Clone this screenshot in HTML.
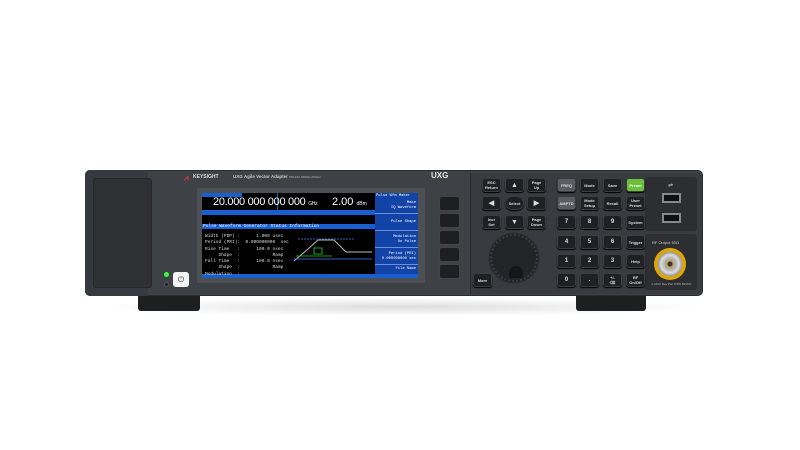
<!DOCTYPE html>
<html><head><style>
*{margin:0;padding:0;box-sizing:border-box}
body{width:800px;height:450px;background:#fff;position:relative;overflow:hidden;font-family:"Liberation Sans",sans-serif}
.a{position:absolute}
.k{position:absolute;width:19px;height:14px;background:#1e2023;border-radius:3px;border:1px solid #3a3d42;color:#ddd;font-size:4px;font-weight:bold;text-align:center;line-height:5px;display:flex;align-items:center;justify-content:center;box-shadow:0 1px 1px #000}
.n{font-size:6px}
.sk{position:absolute;left:439px;width:21px;height:15px;background:#1d1f22;border:1px solid #444;border-radius:3px}
.m{font-family:"Liberation Mono",monospace;color:#ddd;font-size:4.5px;position:absolute;white-space:pre}
.s{position:absolute;left:375px;width:43px;height:16px;border-bottom:1px solid #6d8fd8;color:#fff;font-family:"Liberation Mono",monospace;font-size:3.8px;text-align:right;padding:3px 2px 0 0;line-height:4.5px}
</style></head><body>
<div class="a" style="left:95px;top:298px;width:610px;height:18px;background:radial-gradient(ellipse at center,#ddd 0%,#fff 70%)"></div>
<div class="a" style="left:138px;top:295px;width:62px;height:16px;background:#1e1f21;border-radius:0 0 3px 3px"></div>
<div class="a" style="left:576px;top:295px;width:70px;height:16px;background:#1e1f21;border-radius:0 0 3px 3px"></div>
<div class="a" style="left:85px;top:170px;width:618px;height:126px;background:#3e4146;border-radius:5px;border:1px solid #2a2c30"></div>
<div class="a" style="left:85px;top:170px;width:63px;height:126px;background:#363940;border-radius:5px 0 0 5px"></div>
<div class="a" style="left:93px;top:178px;width:59px;height:110px;background:#2e3034;border-radius:3px;border:1px solid #26282b"></div>
<div class="a" style="left:184px;top:173px;color:#e03a2e;font-size:8px;font-weight:bold">⩘</div>
<div class="a" style="left:193px;top:174px;color:#ddd;font-size:5px;font-weight:bold">KEYSIGHT</div>
<div class="a" style="left:233px;top:174px;color:#ccc;font-size:4.5px;font-weight:bold">UXG Agile Vector Adapter <span style="font-size:3px;color:#999">N5194A  50MHz-20GHz</span></div>
<div class="a" style="left:431px;top:171px;color:#e8e8e8;font-size:8px;font-weight:bold">UXG</div>
<div class="a" style="left:197px;top:188px;width:228px;height:95px;background:#4c4f54;border-radius:2px"></div>
<div class="a" style="left:202px;top:193px;width:216px;height:85px;background:#000"></div>
<div class="a" style="left:202px;top:193px;width:40px;height:4px;background:#1a5fd0"></div>
<div class="a" style="left:277px;top:193px;width:72px;height:20px;background:#000;border-left:1px solid #1a5fd0"></div>
<div class="a" style="left:202px;top:210px;width:173px;height:5px;background:#1a5fd0"></div>
<div class="a" style="left:202px;top:224px;width:173px;height:5px;background:#1a5fd0"></div>
<div class="a" style="left:202px;top:274px;width:216px;height:4px;background:#1a5fd0"></div>
<div class="a" style="left:375px;top:193px;width:43px;height:81px;background:#1244a8"></div>
<div class="a" style="left:213px;top:196px;color:#fff;font-size:11px;letter-spacing:-.3px">20.000 000 000 000 <span style="font-size:5px">GHz</span></div>
<div class="a" style="left:332px;top:196px;color:#fff;font-size:11px">2.00 <span style="font-size:5px">dBm</span></div>
<div class="m" style="left:203px;top:224px;color:#fff">Pulse Waveform Generator Status Information</div>
<div class="m" style="left:205px;top:234px;line-height:6.3px">Width (PDP) :      1.000 usec
Period (PRI):  0.000000000  sec
Rise Time   :      100.0 nsec
     Shape  :            Ramp
Fall Time   :      100.0 nsec
     Shape  :            Ramp
Modulation  :</div>
<svg class="a" style="left:292px;top:238px" width="82" height="30"><polyline points="2,23 16,11 26,2 42,2 54,14 80,14" fill="none" stroke="#bbb" stroke-width="1"/><line x1="2" y1="21" x2="80" y2="21" stroke="#4a7cff" stroke-width=".7"/><rect x="22" y="10" width="8" height="6" fill="none" stroke="#2c2" stroke-width=".8"/><line x1="4" y1="18" x2="40" y2="18" stroke="#2c2" stroke-width=".8"/><line x1="6" y1="1" x2="62" y2="1" stroke="#4a7cff" stroke-dasharray="2 1" stroke-width=".7"/></svg>
<div class="m" style="left:376px;top:194px;color:#fff;font-size:3.8px">Pulse Wfm Maker</div>
<div class="s" style="top:198px">Make<br>IQ Waveform</div>
<div class="s" style="top:215px;padding-top:5px">Pulse Shape</div>
<div class="s" style="top:232px">Modulation<br>On Pulse</div>
<div class="s" style="top:249px">Period (PRI)<br>0.000000000 sec</div>
<div class="s" style="top:266px;height:8px;border:none;padding-top:1px">File Name</div>
<div class="sk" style="top:196px"></div><div class="sk" style="top:213px"></div><div class="sk" style="top:230px"></div><div class="sk" style="top:247px"></div><div class="sk" style="top:264px"></div>
<div class="a" style="left:164px;top:272px;width:5px;height:5px;border-radius:50%;background:#3f3"></div>
<div class="a" style="left:164px;top:282px;width:5px;height:5px;border-radius:50%;background:#222;border:1px solid #555"></div>
<div class="a" style="left:173px;top:272px;width:16px;height:15px;background:#f4f4f4;border-radius:3px;color:#333;font-size:8px;text-align:center;line-height:15px">⏻</div>
<div class="a" style="left:470px;top:173px;width:232px;height:121px;background:#383b40;border-left:1px solid #2a2c30"></div>
<div class="a" style="left:645px;top:177px;width:52px;height:54px;background:#2c2e32;border-radius:3px"></div>
<div class="a" style="left:645px;top:234px;width:52px;height:56px;background:#2c2e32;border-radius:3px"></div>
<div class="a" style="left:668px;top:182px;color:#ccc;font-size:6px">⇌</div>
<div class="a" style="left:662px;top:193px;width:19px;height:10px;background:#111;border:2px solid #888"></div>
<div class="a" style="left:662px;top:213px;width:19px;height:10px;background:#111;border:2px solid #888"></div>
<div class="a" style="left:652px;top:240px;color:#ccc;font-size:4px">RF Output 50Ω</div>
<div class="a" style="left:654px;top:248px;width:32px;height:32px;border-radius:50%;background:radial-gradient(circle,#333 0 2px,#c9a44a 3px,#aaa 5px,#ddd 9px,#999 12px,#e0a700 13px,#e0a700 16px)"></div>
<div class="a" style="left:651px;top:282px;color:#bbb;font-size:3px">⚠ MAX Rev Pwr 0.5W 50VDC</div>
<div class="k" style="left:482px;top:178px">ESC<br>Return</div>
<div class="k" style="left:505px;top:178px;font-size:7px">▲</div>
<div class="k" style="left:527px;top:178px">Page<br>Up</div>
<div class="k" style="left:557px;top:178px;background:#5a5e64">FREQ</div>
<div class="k" style="left:580px;top:178px">Mode</div>
<div class="k" style="left:603px;top:178px">Save</div>
<div class="k" style="left:626px;top:178px;background:#6bbf3a;color:#fff">Preset</div>
<div class="k" style="left:482px;top:196px;font-size:7px">◀</div>
<div class="k" style="left:505px;top:196px;border-radius:7px">Select</div>
<div class="k" style="left:527px;top:196px;font-size:7px">▶</div>
<div class="k" style="left:557px;top:196px;background:#5a5e64">AMPTD</div>
<div class="k" style="left:580px;top:196px">Mode<br>Setup</div>
<div class="k" style="left:603px;top:196px">Recall</div>
<div class="k" style="left:626px;top:196px">User<br>Preset</div>
<div class="k" style="left:482px;top:215px">Incr<br>Set</div>
<div class="k" style="left:505px;top:215px;font-size:7px">▼</div>
<div class="k" style="left:527px;top:215px">Page<br>Down</div>
<div class="k n" style="left:557px;top:215px">7</div><div class="k n" style="left:580px;top:215px">8</div><div class="k n" style="left:603px;top:215px">9</div><div class="k" style="left:626px;top:215px">System</div>
<div class="k n" style="left:557px;top:235px">4</div><div class="k n" style="left:580px;top:235px">5</div><div class="k n" style="left:603px;top:235px">6</div><div class="k" style="left:626px;top:235px">Trigger</div>
<div class="k n" style="left:557px;top:254px">1</div><div class="k n" style="left:580px;top:254px">2</div><div class="k n" style="left:603px;top:254px">3</div><div class="k" style="left:626px;top:254px">Help</div>
<div class="k n" style="left:557px;top:273px">0</div><div class="k n" style="left:580px;top:273px">.</div><div class="k" style="left:603px;top:273px">+/-<br>⌫</div><div class="k" style="left:626px;top:273px">RF<br>On/Off</div>
<div class="k" style="left:473px;top:273px">More</div>
<div class="a" style="left:490px;top:234px;width:48px;height:48px;border-radius:50%;background:#222427;border:2px dotted #3a3d41;box-shadow:0 0 2px #000"></div>
<div class="a" style="left:509px;top:266px;width:14px;height:12px;border-radius:7px 7px 2px 2px;background:#151618"></div>
</body></html>
